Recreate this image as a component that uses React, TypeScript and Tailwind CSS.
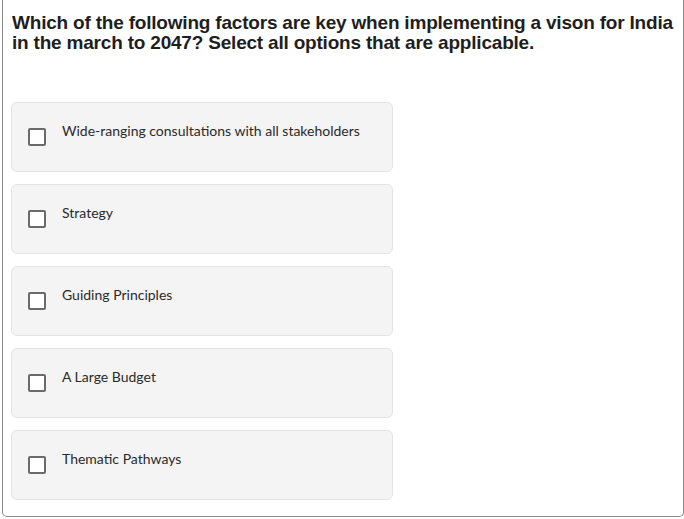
import React from "react";

const options = [
  "Wide-ranging consultations with all stakeholders",
  "Strategy",
  "Guiding Principles",
  "A Large Budget",
  "Thematic Pathways",
];

export default function App() {
  return (
    <div className="w-[684px] h-[519px] bg-white overflow-hidden">
      <div className="ml-[2px] w-[682px] h-[517px] border-l border-r border-b border-[#8a8a8a] rounded-b-[5px] px-2 pt-[13px]">
        <h1
          className="pl-[1px] text-[19px] leading-[20px] tracking-[-0.2px] font-bold text-[#1e1e1e]"
          style={{ fontFamily: '"Liberation Sans", Arial, sans-serif' }}
        >
          Which of the following factors are key when implementing a vison for India in the march to 2047? Select all options that are applicable.
        </h1>
        <div className="mt-[49px] flex flex-col gap-[12px]">
          {options.map((o) => (
            <label
              key={o}
              className="w-[382px] h-[70px] bg-[#f4f4f4] border border-[#e3e3e3] rounded-[6px] flex items-start gap-4 pl-4 pt-[19px]"
            >
              <span className="mt-[6px] w-[18px] h-[18px] shrink-0 border-2 border-[#6a6a6a] rounded-[2px] bg-white" />
              <span
                className="text-[14px] leading-[18px] text-[#2a2a2a]"
                style={{ fontFamily: 'Lato, "Open Sans", sans-serif' }}
              >
                {o}
              </span>
            </label>
          ))}
        </div>
      </div>
    </div>
  );
}
